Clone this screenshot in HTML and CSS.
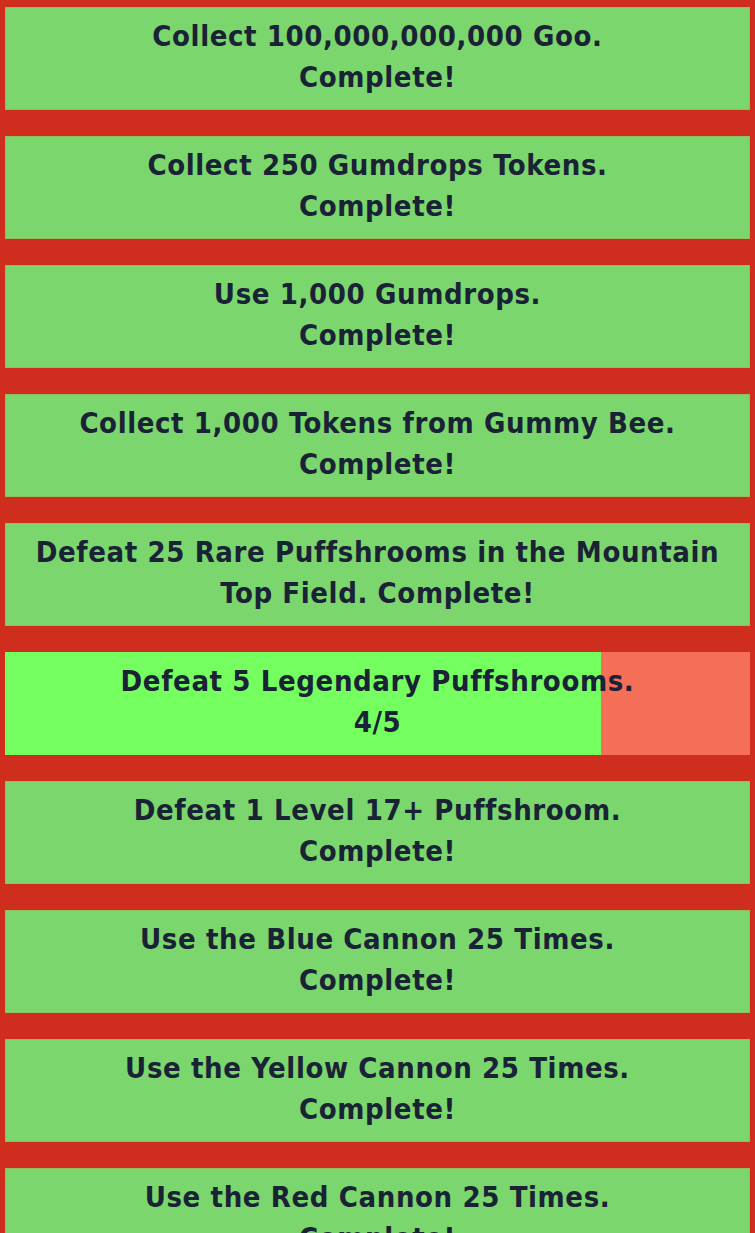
FILE: index.html
```html
<!DOCTYPE html>
<html>
<head>
<meta charset="utf-8">
<link rel="stylesheet" href="styles.css">
</head>
<body>
<div class="list">
  <div class="quest"><div class="label">Collect 100,000,000,000 Goo.<br>Complete!</div></div>
  <div class="quest"><div class="label">Collect 250 Gumdrops Tokens.<br>Complete!</div></div>
  <div class="quest"><div class="label">Use 1,000 Gumdrops.<br>Complete!</div></div>
  <div class="quest"><div class="label">Collect 1,000 Tokens from Gummy Bee.<br>Complete!</div></div>
  <div class="quest"><div class="label">Defeat 25 Rare Puffshrooms in the Mountain<br>Top Field. Complete!</div></div>
  <div class="quest progress"><div class="fill" style="width:80%"></div><div class="label">Defeat 5 Legendary Puffshrooms.<br>4/5</div></div>
  <div class="quest"><div class="label">Defeat 1 Level 17+ Puffshroom.<br>Complete!</div></div>
  <div class="quest"><div class="label">Use the Blue Cannon 25 Times.<br>Complete!</div></div>
  <div class="quest"><div class="label">Use the Yellow Cannon 25 Times.<br>Complete!</div></div>
  <div class="quest"><div class="label">Use the Red Cannon 25 Times.<br>Complete!</div></div>
</div>
</body>
</html>
```
FILE: styles.css
```css
html, body {
  margin: 0;
  padding: 0;
  background: #cf2d1e;
  overflow: hidden;
}
.list {
  display: flex;
  flex-direction: column;
  gap: 26px;
  padding: 7px 5px 0 5px;
}
.quest {
  position: relative;
  height: 103px;
  background: #7bd66d;
  display: flex;
  align-items: center;
  justify-content: center;
  box-shadow: inset 0 0 0 1px #8fbf5a;
}
.quest.progress {
  background: #f46e58;
  box-shadow: none;
}
.fill {
  position: absolute;
  left: 0;
  top: 0;
  bottom: 0;
  background: #75fe5f;
}
.label {
  position: relative;
  top: -2px;
  text-align: center;
  font-family: "DejaVu Sans Condensed", "DejaVu Sans", sans-serif;
  font-weight: bold;
  font-size: 29px;
  letter-spacing: 0.6px;
  line-height: 41px;
  color: #1a2236;
  white-space: nowrap;
}
```
